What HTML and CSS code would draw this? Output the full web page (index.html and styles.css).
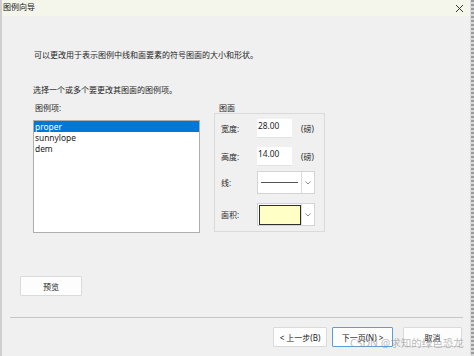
FILE: index.html
```html
<!DOCTYPE html>
<html lang="zh-CN">
<head>
  <meta charset="UTF-8" />
  <title>图例向导</title>
  <link rel="stylesheet" href="styles.css">
</head>
<body>
  <div class="screen">
    <div class="dialog">
      <div class="titlebar">
        <span class="title">图例向导</span>
        <svg class="close" width="9" height="9" viewBox="0 0 9 9">
          <path d="M1 1 L8 8 M8 1 L1 8" stroke="#333" stroke-width="1" fill="none"/>
        </svg>
      </div>

      <div class="content">
        <p class="intro">可以更改用于表示图例中线和面要素的符号图面的大小和形状。</p>
        <p class="prompt">选择一个或多个要更改其图面的图例项。</p>

        <div class="panes">
          <div class="items-pane">
            <div class="pane-label">图例项:</div>
            <ul class="listbox">
              <li class="selected">proper</li>
              <li>sunnylope</li>
              <li>dem</li>
            </ul>
          </div>

          <div class="patch-pane">
            <div class="pane-label group-label">图面</div>
            <div class="groupbox">
              <div class="field">
                <span class="field-label">宽度:</span>
                <span class="textbox">28.00</span>
                <span class="unit">(磅)</span>
              </div>
              <div class="field">
                <span class="field-label">高度:</span>
                <span class="textbox">14.00</span>
                <span class="unit">(磅)</span>
              </div>
              <div class="field combo-row line-row">
                <span class="field-label">线:</span>
                <div class="combo">
                  <div class="combo-value"><span class="line-sample"></span></div>
                  <div class="combo-arrow">
                    <svg width="6" height="4" viewBox="0 0 6 4"><path d="M0.5 0.5 L3 3 L5.5 0.5" stroke="#8a8a8a" fill="none"/></svg>
                  </div>
                </div>
              </div>
              <div class="field combo-row">
                <span class="field-label">面积:</span>
                <div class="combo">
                  <div class="combo-value"><span class="fill-sample"></span></div>
                  <div class="combo-arrow">
                    <svg width="6" height="4" viewBox="0 0 6 4"><path d="M0.5 0.5 L3 3 L5.5 0.5" stroke="#8a8a8a" fill="none"/></svg>
                  </div>
                </div>
              </div>
            </div>
          </div>
        </div>

        <button class="btn preview-btn">预览</button>
      </div>

      <div class="separator"></div>

      <div class="actions">
        <button class="btn back-btn">&lt; 上一步(B)</button>
        <button class="btn next-btn">下一页(N) &gt;</button>
        <button class="btn cancel-btn">取消</button>
      </div>

      <div class="watermark">CSDN @求知的绿色恐龙</div>
    </div>
    <div class="desk-edge"></div>
  </div>
</body>
</html>
```

FILE: styles.css
```css
:root {
  --fondo: #f0f0f0;
  --texto: #1e1e1e;
  --borde: #c9c9c9;
  --azul: #0078d7;
}

body {
  margin: 0;
  width: 474px;
  height: 356px;
  overflow: hidden;
  background: var(--fondo);
  font-family: "Noto Sans", "Noto Sans CJK SC", sans-serif;
  font-size: 8px;
  color: var(--texto);
}

.screen {
  display: flex;
  height: 356px;
}

.dialog {
  position: relative;
  width: 468px;
  display: flex;
  flex-direction: column;
  border-left: 2px solid #cfcfcf;
  border-right: 1px solid #dedede;
  background: var(--fondo);
}

.desk-edge {
  flex: 1;
  background: repeating-linear-gradient(to bottom, #9c9c9c 0 2px, #d6d6d6 2px 4px);
}

.titlebar {
  height: 16px;
  display: flex;
  align-items: center;
  justify-content: space-between;
  padding: 0 6px 0 1px;
  background: #f4f6ec;
}

.title {
  font-size: 8px;
  line-height: 14px;
  color: #111;
  margin-top: -2px;
}

.close {
  display: block;
}

.content {
  padding-left: 18px;
}

.intro,
.prompt {
  margin: 0 0 0 14px;
  line-height: 11px;
}

.intro {
  margin-top: 33px;
}

.prompt {
  margin-top: 24px;
  margin-left: 13px;
}

.panes {
  display: flex;
  margin: 7px 0 0 13px;
  gap: 14px;
}

.pane-label {
  line-height: 11px;
  padding-left: 2px;
}

.items-pane {
  width: 167px;
}

.listbox {
  list-style: none;
  margin: 7px 0 0;
  padding: 0;
  height: 111px;
  background: #fff;
  border: 1px solid #aeaeae;
}

.listbox li {
  height: 11px;
  line-height: 11px;
  padding-left: 1px;
  font-size: 8.4px;
  color: #222;
}

.listbox li.selected {
  background: var(--azul);
  color: #fff;
}

.patch-pane {
  width: 111px;
}

.group-label {
  padding-left: 5px;
}

.groupbox {
  height: 107px;
  padding: 5px 0 5px 6px;
  border: 1px solid #dadada;
  display: flex;
  flex-direction: column;
}

.field {
  display: flex;
  align-items: center;
  height: 18px;
}

.field + .field {
  margin-top: 10px;
}

.field.combo-row {
  height: 23px;
}

.field.line-row {
  margin-top: 6px;
}

.field.combo-row + .field.combo-row {
  margin-top: 9px;
}

.field-label {
  width: 36px;
}

.textbox {
  width: 34px;
  height: 18px;
  padding-left: 1px;
  line-height: 13px;
  font-size: 8.4px;
  background: #fff;
  box-shadow: 0 1px 0 #e2e2e2;
}

.unit {
  margin-left: 9px;
}

.combo {
  display: flex;
  width: 58px;
  height: 23px;
  border: 1px solid #d4d4d4;
  box-sizing: border-box;
  background: #fff;
}

.combo-value {
  flex: 1;
  display: flex;
  align-items: center;
  justify-content: center;
}

.combo-arrow {
  width: 12px;
  display: flex;
  align-items: center;
  justify-content: center;
  border-left: 1px solid #dcdcdc;
}

.line-sample {
  width: 37px;
  height: 1px;
  background: #555;
}

.fill-sample {
  width: 42px;
  height: 20px;
  box-sizing: border-box;
  border: 1px solid #2f2f2f;
  background: #ffffc6;
}

.btn {
  height: 20px;
  padding: 0;
  font-family: inherit;
  font-size: 8px;
  color: #222;
  background: #fdfdfd;
  border: 1px solid #dadada;
  border-radius: 1px;
}

.preview-btn {
  display: block;
  width: 62px;
  margin-top: 43px;
}

.separator {
  height: 1px;
  margin: 21px 7px 0 8px;
  background: #c6c6c6;
}

.actions {
  display: flex;
  justify-content: flex-end;
  padding-right: 8px;
  margin-top: 9px;
}

.back-btn {
  width: 54px;
}

.next-btn {
  width: 61px;
  margin-left: 5px;
  border-color: #5a9fdc;
}

.cancel-btn {
  width: 59px;
  margin-left: 10px;
}

.watermark {
  position: absolute;
  left: 348px;
  top: 336px;
  font-size: 10.5px;
  line-height: 14px;
  color: rgba(140, 140, 140, 0.6);
  white-space: nowrap;
}
```
